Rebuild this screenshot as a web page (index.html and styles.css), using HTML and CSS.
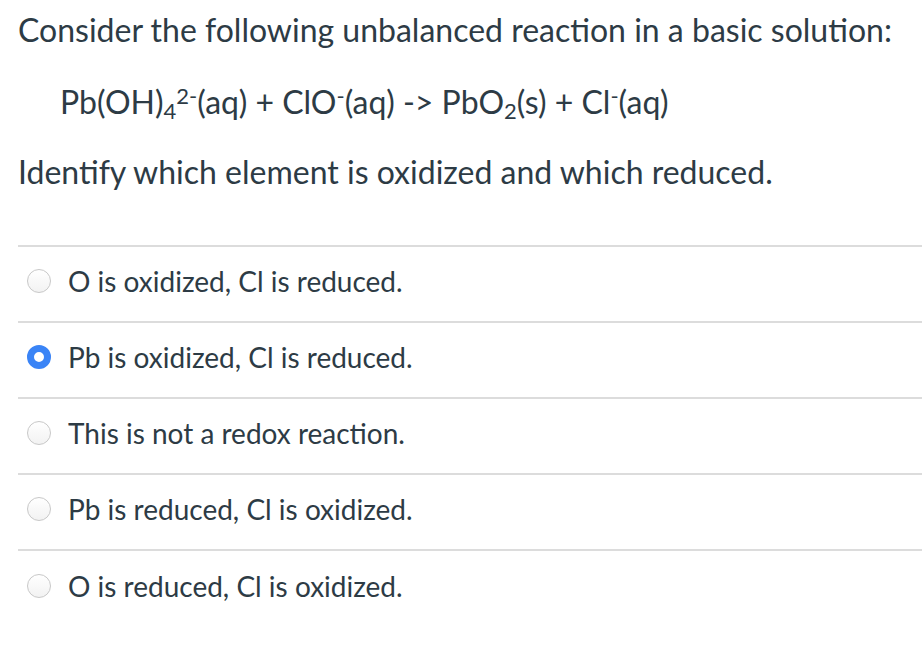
FILE: index.html
```html
<!DOCTYPE html>
<html lang="en">
<head>
<meta charset="utf-8">
<title>Question</title>
<link rel="stylesheet" href="styles.css">
</head>
<body>
<div class="question">
  <p class="prompt">Consider the following unbalanced reaction in a basic solution:</p>
  <p class="equation">Pb(OH)<sub>4</sub><sup>2-</sup>(aq) + ClO<sup>-</sup>(aq) -&gt; PbO<sub>2</sub>(s) + Cl<sup>-</sup>(aq)</p>
  <p class="prompt">Identify which element is oxidized and which reduced.</p>
  <div class="answers">
    <label class="answer"><span class="radio"></span><span class="label-text">O is oxidized, Cl is reduced.</span></label>
    <label class="answer"><span class="radio checked"></span><span class="label-text">Pb is oxidized, Cl is reduced.</span></label>
    <label class="answer"><span class="radio"></span><span class="label-text">This is not a redox reaction.</span></label>
    <label class="answer"><span class="radio"></span><span class="label-text">Pb is reduced, Cl is oxidized.</span></label>
    <label class="answer"><span class="radio"></span><span class="label-text">O is reduced, Cl is oxidized.</span></label>
  </div>
</div>
</body>
</html>
```

FILE: styles.css
```css
html, body {
  margin: 0;
  padding: 0;
  background: #ffffff;
}
body {
  font-family: Lato, "Open Sans", sans-serif;
  color: #2d3b45;
}
.question {
  padding: 8px 0 0 18px;
}
.prompt {
  margin: 0;
  font-size: 32px;
  line-height: 44px;
}
.equation {
  margin: 28px 0 26px 42px;
  font-size: 32px;
  line-height: 44px;
}
.equation sub, .equation sup {
  font-size: 22px;
  line-height: 0;
}
.equation sup {
  vertical-align: 10px;
}
.equation sub {
  vertical-align: -5px;
}
.answers {
  margin-top: 51px;
  border-top: 2px solid #dcdcdc;
}
.answer {
  display: flex;
  align-items: center;
  gap: 17px;
  padding-left: 9px;
  padding-bottom: 6px;
  box-sizing: border-box;
  height: 76px;
  border-bottom: 2px solid #dcdcdc;
  font-size: 28px;
}
.answer:last-child {
  border-bottom: none;
}
.radio {
  width: 22px;
  height: 22px;
  border-radius: 50%;
  border: 1px solid #c8c8c8;
  background: linear-gradient(#ffffff, #f2f2f2);
  flex: none;
}
.radio.checked {
  border: 7px solid #3a84f6;
  width: 10px;
  height: 10px;
  background: #ffffff;
}
```
